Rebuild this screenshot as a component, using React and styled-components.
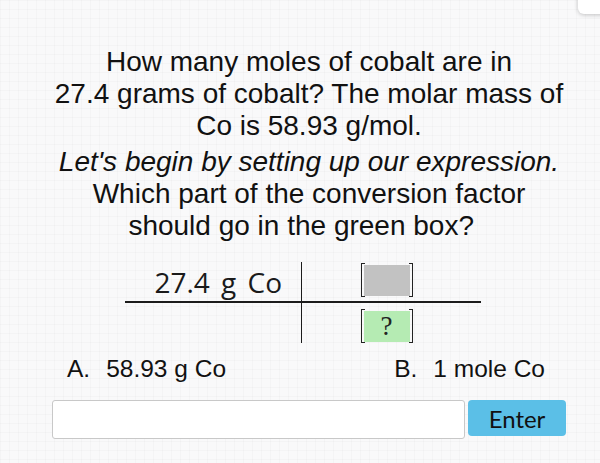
import styled, { createGlobalStyle } from 'styled-components';

const GlobalStyle = createGlobalStyle`
    html, body {
        margin: 0;
        padding: 0;
        height: 100%;
    }
    body {
        font-family: "Liberation Sans", Arial, sans-serif;
        color: #111;
        background-color: #f9f9fa;
        background-image:
            linear-gradient(to right, rgba(0, 0, 0, 0.018) 1px, transparent 1px),
            linear-gradient(to bottom, rgba(0, 0, 0, 0.018) 1px, transparent 1px);
        background-size: 9px 9px;
    }
`;

const Page = styled.div`
    position: relative;
    width: 600px;
    height: 463px;
    overflow: hidden;
    padding-top: 46px;
    box-sizing: border-box;
`;

const CornerCard = styled.div`
    position: absolute;
    top: -8px;
    right: -12px;
    width: 34px;
    height: 22px;
    background: #fff;
    border-radius: 6px;
    box-shadow: 0 1px 4px rgba(0, 0, 0, 0.22);
`;

const Prompt = styled.p`
    margin: 0;
    padding-left: 18px;
    font-size: 28px;
    line-height: 32px;
    text-align: center;
    font-style: ${(p) => (p.$italic ? 'italic' : 'normal')};
`;

const Hint = styled.div`
    margin-top: 4px;
`;

const Factor = styled.div`
    display: grid;
    grid-template-columns: 177px 179px;
    grid-template-rows: 41px 40px;
    margin: 20px 0 0 125px;
    width: 356px;
`;

const Cell = styled.div`
    display: flex;
    justify-content: ${(p) => (p.$left ? 'flex-end' : 'center')};
    align-items: flex-start;
    box-sizing: border-box;
    padding-right: ${(p) => (p.$left ? '19px' : '10px')};
    padding-top: ${(p) => (p.$bottom ? '6px' : '1px')};
    border-right: ${(p) => (p.$left ? '1.5px solid #1c1c1c' : 'none')};
    border-bottom: ${(p) => (p.$bottom ? 'none' : '2px solid #1c1c1c')};
`;

const MathText = styled.span`
    font-family: "Open Sans", sans-serif;
    font-size: 28px;
    line-height: 38px;
    word-spacing: 4px;
    color: #1a1a1a;
`;

const Slot = styled.div`
    display: flex;
    align-items: stretch;
    height: 34px;

    &::before,
    &::after {
        content: '';
        width: 4px;
        box-sizing: border-box;
        border: 1.5px solid #222;
        position: relative;
        z-index: 1;
    }
    &::before {
        border-right: none;
        margin-right: -1px;
    }
    &::after {
        border-left: none;
        margin-left: -1px;
    }
`;

const SlotFill = styled.div`
    width: 46px;
    margin: 2px 0 1px;
    background: ${(p) => p.$color};
    display: flex;
    align-items: center;
    justify-content: center;
    font-family: "Liberation Serif", serif;
    font-size: 27px;
    line-height: 1;
    color: #222;
`;

const Choices = styled.div`
    display: flex;
    justify-content: space-between;
    margin-top: 12px;
    padding: 0 55px 0 67px;
    font-size: 24.5px;
    line-height: 28px;
`;

const Choice = styled.div`
    display: flex;
    gap: 16px;
`;

const AnswerRow = styled.div`
    display: flex;
    align-items: flex-start;
    gap: 3px;
    margin-top: 17px;
    padding-left: 52px;
`;

const AnswerInput = styled.input`
    width: 413px;
    height: 39px;
    box-sizing: border-box;
    border: 1px solid #c8c8c8;
    border-radius: 3px;
    background: #fff;
    outline: none;
`;

const EnterButton = styled.button`
    width: 98px;
    height: 36px;
    border: none;
    border-radius: 4px;
    background: #5bbfe7;
    color: #111;
    font-family: Lato, "Open Sans", sans-serif;
    font-size: 24px;
    cursor: pointer;
    padding: 0;
`;

export default function App() {
    return (
        <>
            <GlobalStyle />
            <Page>
                <CornerCard />
                <Prompt>
                    How many moles of cobalt are in
                    <br />
                    27.4 grams of cobalt? The molar mass of
                    <br />
                    Co is 58.93 g/mol.
                </Prompt>
                <Hint>
                    <Prompt $italic>Let's begin by setting up our expression.</Prompt>
                    <Prompt>
                        Which part of the conversion factor
                        <br />
                        should go in the green box?{'\u00a0\u00a0'}
                    </Prompt>
                </Hint>
                <Factor>
                    <Cell $left>
                        <MathText>27.4 g Co</MathText>
                    </Cell>
                    <Cell>
                        <Slot>
                            <SlotFill $color="#c2c2c2" />
                        </Slot>
                    </Cell>
                    <Cell $left $bottom />
                    <Cell $bottom>
                        <Slot>
                            <SlotFill $color="#b5ebb3">?</SlotFill>
                        </Slot>
                    </Cell>
                </Factor>
                <Choices>
                    <Choice>
                        <span>A.</span>
                        <span>58.93 g Co</span>
                    </Choice>
                    <Choice>
                        <span>B.</span>
                        <span>1 mole Co</span>
                    </Choice>
                </Choices>
                <AnswerRow>
                    <AnswerInput type="text" />
                    <EnterButton>Enter</EnterButton>
                </AnswerRow>
            </Page>
        </>
    );
}
